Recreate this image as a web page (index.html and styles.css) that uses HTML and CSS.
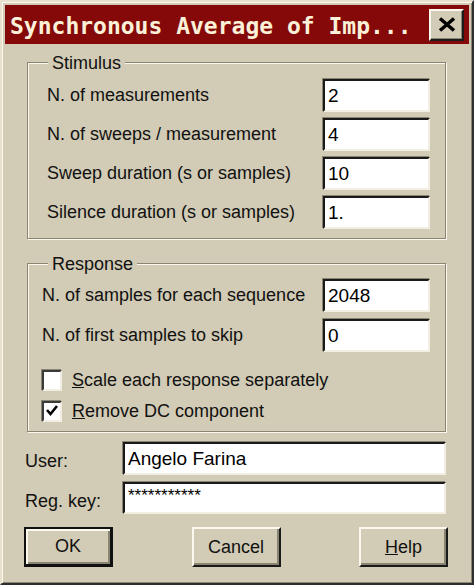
FILE: index.html
```html
<!DOCTYPE html>
<html>
<head>
<meta charset="utf-8">
<title>Synchronous Average</title>
<link rel="stylesheet" href="styles.css">
</head>
<body>
<div class="window">
  <div class="titlebar">
    <span class="title">Synchronous Average of Imp...</span>
    <button class="close" aria-label="Close">
      <svg width="18" height="15" viewBox="0 0 18 15"><path d="M2 1.5 L16 13.5 M16 1.5 L2 13.5" stroke="#000" stroke-width="3.6" fill="none"/></svg>
    </button>
  </div>
  <div class="content">
    <div class="group stimulus">
      <span class="legend">Stimulus</span>
      <div class="row"><span class="label">N. of measurements</span><div class="field">2</div></div>
      <div class="row"><span class="label">N. of sweeps / measurement</span><div class="field">4</div></div>
      <div class="row"><span class="label">Sweep duration (s or samples)</span><div class="field">10</div></div>
      <div class="row"><span class="label">Silence duration (s or samples)</span><div class="field">1.</div></div>
    </div>
    <div class="group response">
      <span class="legend">Response</span>
      <div class="row"><span class="label">N. of samples for each sequence</span><div class="field">2048</div></div>
      <div class="row"><span class="label">N. of first samples to skip</span><div class="field">0</div></div>
      <div class="check first"><span class="box"></span><span><u>S</u>cale each response separately</span></div>
      <div class="check"><span class="box"><svg width="16" height="16" viewBox="0 0 16 16"><path d="M3 7 L6.5 11 L13 3" stroke="#000" stroke-width="2.6" fill="none"/></svg></span><span><u>R</u>emove DC component</span></div>
    </div>
    <div class="frow user"><span class="flabel">User:</span><div class="field wide">Angelo Farina</div></div>
    <div class="frow key"><span class="flabel">Reg. key:</span><div class="field wide keytext">***********</div></div>
    <div class="buttons">
      <button class="btn default">OK</button>
      <button class="btn">Cancel</button>
      <button class="btn"><u>H</u>elp</button>
    </div>
  </div>
</div>
</body>
</html>
```
FILE: styles.css
```css
body {
  margin: 0;
  background: #d2cbb5;
  font-family: "Liberation Sans", Arial, sans-serif;
  font-size: 18px;
  color: #111;
}
.window {
  box-sizing: border-box;
  width: 474px;
  height: 585px;
  background: #d2cbb5;
  border: 2px solid;
  border-color: #e6e0cc #2e2e2e #2e2e2e #e6e0cc;
  box-shadow: inset 1px 1px 0 #fbf8ee, inset -1px -1px 0 #8a8472;
  padding: 3px;
  display: flex;
  flex-direction: column;
}
.titlebar {
  height: 39px;
  flex: none;
  background: #850909;
  display: flex;
  align-items: center;
  justify-content: space-between;
  padding: 0 5px;
}
.title {
  font-family: "DejaVu Sans Mono", monospace;
  font-weight: bold;
  font-size: 23px;
  line-height: 1;
  color: #fbf1d9;
  padding-top: 4px;
  white-space: nowrap;
}
.close {
  box-sizing: border-box;
  width: 35px;
  height: 32px;
  padding: 0;
  background: #d2cbb5;
  border: 2px solid;
  border-color: #fbf8ee #1c1c1c #1c1c1c #fbf8ee;
  box-shadow: inset -1px -1px 0 #8a8472;
  display: flex;
  align-items: center;
  justify-content: center;
}
.content {
  padding: 18px 21px 0 19px;
  display: flex;
  flex-direction: column;
}
.group {
  position: relative;
  border: 1px solid #8a8472;
  box-shadow: inset 1px 1px 0 #fbf8ee, 1px 1px 0 #fbf8ee;
  margin: 0 2px 0 3px;
}
.legend {
  position: absolute;
  top: -10px;
  left: 20px;
  padding: 0 4px;
  background: #d2cbb5;
  line-height: 20px;
}
.stimulus {
  padding: 16px 15px 9px 19px;
}
.response {
  margin-top: 24px;
  padding: 15px 15px 5px 14px;
}
.row {
  display: flex;
  align-items: center;
  justify-content: space-between;
  height: 33px;
}
.stimulus .row + .row {
  margin-top: 6px;
}
.response .row + .row {
  margin-top: 7px;
}
.field {
  box-sizing: border-box;
  width: 107px;
  height: 33px;
  background: #fff;
  border: 2px solid;
  border-color: #1a1a1a #f2eee2 #f2eee2 #1a1a1a;
  box-shadow: -1px -1px 0 #8a8472;
  padding: 0 3px;
  font-size: 19px;
  display: flex;
  align-items: center;
  color: #000;
}
.check {
  height: 30px;
  display: flex;
  align-items: center;
  gap: 10px;
  margin-top: 1px;
}
.check.first {
  margin-top: 13px;
}
.box {
  box-sizing: border-box;
  width: 20px;
  height: 21px;
  background: #fff;
  border: 2px solid;
  border-color: #3a3a3a #f2eee2 #f2eee2 #3a3a3a;
  box-shadow: -1px -1px 0 #8a8472;
  display: flex;
  align-items: center;
  justify-content: center;
}
.frow {
  display: flex;
  align-items: center;
  height: 33px;
  margin-top: 10px;
}
.frow.key {
  margin-top: 7px;
  height: 32px;
}
.flabel {
  width: 98px;
  padding-left: 1px;
  padding-top: 6px;
}
.field.wide {
  width: 323px;
  height: 100%;
}
.keytext {
  font-size: 17px;
  align-items: flex-start;
  padding-top: 2px;
}
.buttons {
  display: flex;
  justify-content: space-between;
  margin-top: 13px;
}
.btn {
  box-sizing: border-box;
  width: 89px;
  height: 40px;
  padding: 0;
  background: #d2cbb5;
  border: 2px solid;
  border-color: #fbf8ee #1a1a1a #1a1a1a #fbf8ee;
  box-shadow: inset -2px -2px 0 #8a8472;
  font-family: "Liberation Sans", Arial, sans-serif;
  font-size: 18px;
  color: #111;
}
.btn.default {
  border: 2px solid #111;
  border-width: 2px 3px 3px 2px;
  box-shadow: inset 2px 2px 0 #fbf8ee, inset -2px -2px 0 #8a8472;
}
```
